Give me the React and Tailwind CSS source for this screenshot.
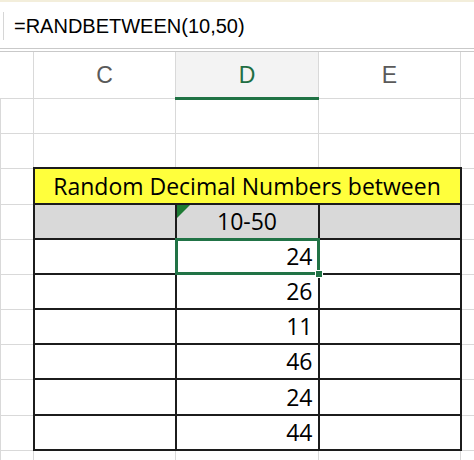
import React from 'react'

const cellFont = { fontFamily: '"Open Sans", Lato, sans-serif' }
const values = [26, 11, 46, 24, 44]

// light gridline cell
function Grid({ children, className = '' }) {
  return <td className={`border border-[#d9d9d9] p-0 ${className}`}>{children}</td>
}

function Box({ children, className = '' }) {
  return <td className={`border-2 border-[#1c1c1c] p-0 leading-[26px] ${className}`}>{children}</td>
}

export default function App() {
  return (
    <div className="w-[474px] h-[460px] overflow-hidden bg-white" style={{ fontFamily: '"Liberation Sans", Arial, sans-serif' }}>
      {/* Formula bar */}
      <div className="h-[2px] bg-[#f3eedb]" />
      <div className="h-[46px] flex items-center relative">
        <div className="absolute left-[3px] top-[10px] h-[28px] w-px bg-[#d6d6d6]" />
        <span className="pl-[14px] pt-[2px] text-[20px] text-black">=RANDBETWEEN(10,50)</span>
      </div>
      <div className="h-[1px] bg-[#c9c9c9]" />
      <div className="h-[2px] bg-white" />
      <div className="h-[1px] bg-[#c9c9c9]" />

      <table className="border-collapse table-fixed w-[474px]">
        <colgroup>
          <col className="w-[33px]" />
          <col className="w-[142px]" />
          <col className="w-[143px]" />
          <col className="w-[142px]" />
          <col className="w-[14px]" />
        </colgroup>
        <tbody>
          {/* column headers */}
          <tr className="h-[46px]">
            <td className="p-0 border-r border-[#d9d9d9]" />
            <td className="p-0 pt-[2px] border-r border-[#d9d9d9] text-center text-[23px] leading-none text-[#5a5a5a] align-middle">C</td>
            <td className="p-0 pt-[2px] border-r border-[#d9d9d9] bg-[#f3f3f3] text-center text-[23px] leading-none text-[#1f6e43] align-middle border-b-[3px] border-b-[#1f7244]">D</td>
            <td className="p-0 pt-[2px] border-r border-[#d9d9d9] text-center text-[23px] leading-none text-[#5a5a5a] align-middle">E</td>
            <td className="p-0" />
          </tr>
          <tr className="h-[35px]">
            <Grid /><Grid /><Grid /><Grid /><Grid />
          </tr>
          <tr className="h-[35px]">
            <Grid /><Grid /><Grid /><Grid /><Grid />
          </tr>
          <tr className="h-[36px]">
            <Grid />
            <td colSpan={3} className="border-2 border-[#1c1c1c] bg-[#ffff3c] p-0 text-center text-[23px] leading-[26px] text-black" style={cellFont}>
              Random Decimal Numbers between
            </td>
            <Grid />
          </tr>
          <tr className="h-[35px]">
            <Grid />
            <Box className="bg-[#d9d9d9]" />
            <Box className="bg-[#d9d9d9] relative text-center text-[23px] text-black">
              <div className="absolute left-0 top-0 w-0 h-0 border-t-[13px] border-t-[#1d7b34] border-r-[13px] border-r-transparent" />
              <span style={cellFont}>10-50</span>
            </Box>
            <Box className="bg-[#d9d9d9]" />
            <Grid />
          </tr>
          <tr className="h-[35px]">
            <Grid />
            <Box />
            <Box className="relative text-right text-[23px] text-black">
              <div className="absolute -left-[2px] -top-[2px] -right-[2px] -bottom-[2px] z-10 border-[3px] border-[#217346]" />
              <div className="absolute -right-[5px] -bottom-[5px] z-20 w-[8px] h-[8px] bg-[#217346] border border-white" />
              <span className="pr-[5px]" style={cellFont}>24</span>
            </Box>
            <Box />
            <Grid />
          </tr>
          {values.map((v, i) => (
            <tr key={i} className={i === 3 ? 'h-[36px]' : 'h-[35px]'}>
              <Grid />
              <Box />
              <Box className="text-right text-[23px] text-black">
                <span className="pr-[5px]" style={cellFont}>{v}</span>
              </Box>
              <Box />
              <Grid />
            </tr>
          ))}
          <tr className="h-[35px]">
            <Grid /><Grid /><Grid /><Grid /><Grid />
          </tr>
        </tbody>
      </table>
    </div>
  )
}
